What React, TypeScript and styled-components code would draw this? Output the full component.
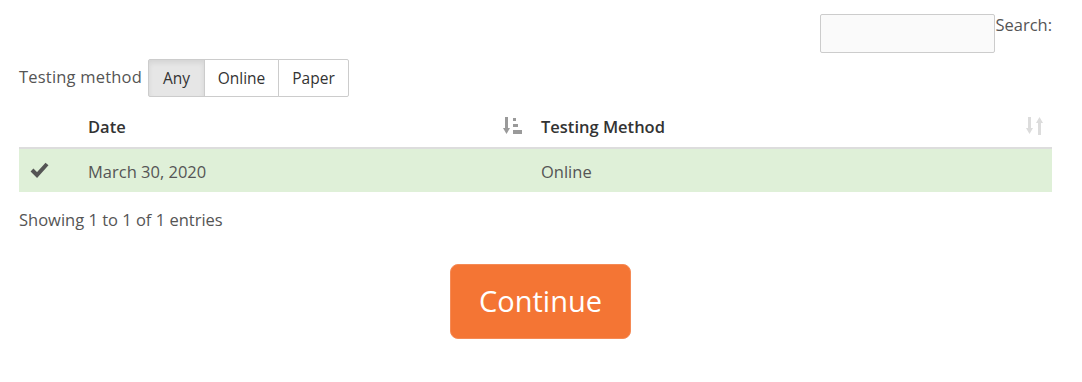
import React from "react";
import styled, { createGlobalStyle } from "styled-components";

const Global = createGlobalStyle`
  html, body { margin: 0; padding: 0; background: #fff; }
  body { font-family: "Open Sans", "Liberation Sans", sans-serif; color: #555; font-size: 16.5px; }
  * { box-sizing: border-box; }
`;

const Page = styled.div`
  padding: 14px 30px 0 19px;
  display: flex;
  flex-direction: column;
`;

const SearchBar = styled.div`
  display: flex;
  justify-content: flex-end;
  align-items: flex-start;
`;

const SearchInput = styled.input`
  width: 175px;
  height: 39px;
  border: 1px solid #ccc;
  background: #fafafa;
  border-radius: 2px;
  outline: none;
`;

const SearchLabel = styled.label`
  font-size: 16.5px;
  color: #555;
  margin-top: -1px;
`;

const FilterRow = styled.div`
  display: flex;
  align-items: center;
  gap: 6px;
  margin-top: 6px;
`;

const FilterLabel = styled.span`
  font-size: 16.5px;
  color: #555;
  margin-top: -3px;
  letter-spacing: 0.2px;
`;

const ButtonGroup = styled.div`
  display: flex;
`;

const GroupButton = styled.button<{ $active?: boolean; $w: number }>`
  width: ${(p) => p.$w}px;
  height: 38px;
  border: 1px solid #ccc;
  margin-left: -1px;
  background: ${(p) => (p.$active ? "#e6e6e6" : "#fff")};
  box-shadow: ${(p) => (p.$active ? "inset 0 3px 5px rgba(0,0,0,0.08)" : "none")};
  font-family: inherit;
  font-size: 15.5px;
  color: #333;
  padding: 0;
  &:first-child { margin-left: 0; border-radius: 2px 0 0 2px; }
  &:last-child { border-radius: 0 2px 2px 0; }
`;

const Table = styled.table`
  width: 100%;
  border-collapse: collapse;
  margin-top: 8px;
`;

const Th = styled.th<{ $w?: number }>`
  ${(p) => (p.$w ? `width: ${p.$w}px;` : "")}
  text-align: left;
  font-weight: 600;
  color: #333;
  font-size: 16.5px;
  height: 43px;
  padding: 0 8px 0 11px;
  border-bottom: 2px solid #ddd;
`;

const HeadInner = styled.div`
  display: flex;
  align-items: center;
  justify-content: space-between;
`;

const Tr = styled.tr`
  background: #dff0d8;
`;

const Td = styled.td`
  height: 44px;
  padding: 1px 11px 0;
  font-size: 16.5px;
  color: #555;
`;

const Info = styled.div`
  margin-top: 16px;
  font-size: 16.5px;
  color: #555;
`;

const ButtonRow = styled.div`
  display: flex;
  justify-content: center;
  margin-top: 33px;
`;

const ContinueButton = styled.button`
  width: 181px;
  height: 75px;
  background: #f47534;
  border: 1px solid #f58a55;
  border-radius: 8px;
  color: #fff;
  font-family: inherit;
  font-size: 29px;
  padding: 0 0 2px;
  margin-left: 10px;
`;

const SortDown = () => (
  <svg width="19" height="18" viewBox="0 0 19 18">
    <g fill="#9a9a9a">
      <rect x="2" y="0" width="3" height="12" />
      <polygon points="0,11 7,11 3.5,17" />
      <rect x="10" y="1" width="3" height="3" />
      <rect x="10" y="7" width="5" height="3" />
      <rect x="10" y="13" width="9" height="4" />
    </g>
  </svg>
);

const SortBoth = () => (
  <svg width="19" height="18" viewBox="0 0 19 18">
    <g fill="#dcdcdc">
      <rect x="3" y="0" width="3" height="12" />
      <polygon points="1,11 8,11 4.5,17" />
      <rect x="13" y="5" width="3" height="13" />
      <polygon points="11,6 18,6 14.5,0" />
    </g>
  </svg>
);

const Check = () => (
  <svg width="19" height="17" viewBox="0 0 19 17">
    <polyline points="2,9 7,14 17,3" fill="none" stroke="#555" strokeWidth="4" strokeLinecap="butt" />
  </svg>
);

export default function App() {
  return (
    <>
      <Global />
      <Page>
        <SearchBar>
          <SearchInput type="search" />
          <SearchLabel>Search:</SearchLabel>
        </SearchBar>
        <FilterRow>
          <FilterLabel>Testing method</FilterLabel>
          <ButtonGroup>
            <GroupButton $active $w={57}>Any</GroupButton>
            <GroupButton $w={75}>Online</GroupButton>
            <GroupButton $w={71}>Paper</GroupButton>
          </ButtonGroup>
        </FilterRow>
        <Table>
          <thead>
            <tr>
              <Th $w={58}></Th>
              <Th $w={453}>
                <HeadInner>
                  <span>Date</span>
                  <SortDown />
                </HeadInner>
              </Th>
              <Th>
                <HeadInner>
                  <span>Testing Method</span>
                  <SortBoth />
                </HeadInner>
              </Th>
            </tr>
          </thead>
          <tbody>
            <Tr>
              <Td><Check /></Td>
              <Td>March 30, 2020</Td>
              <Td>Online</Td>
            </Tr>
          </tbody>
        </Table>
        <Info>Showing 1 to 1 of 1 entries</Info>
        <ButtonRow>
          <ContinueButton>Continue</ContinueButton>
        </ButtonRow>
      </Page>
    </>
  );
}
